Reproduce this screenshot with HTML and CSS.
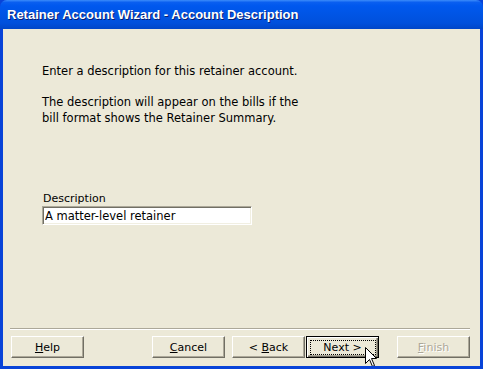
FILE: index.html
```html
<!DOCTYPE html>
<html lang="en">
<head>
    <meta charset="UTF-8">
    <title>Retainer Account Wizard - Account Description</title>
    <link rel="stylesheet" href="styles.css">
</head>
<body>
    <div class="window">
        <div class="title-bar">
            <span class="title-text">Retainer Account Wizard - Account Description</span>
        </div>
        <div class="frame">
            <div class="content">
                <p class="intro">Enter a description for this retainer account.</p>
                <p class="note">The description will appear on the bills if the<br>bill format shows the Retainer Summary.</p>

                <div class="field">
                    <label for="description">Description</label>
                    <input type="text" id="description" class="edit" value="A matter-level retainer">
                </div>
            </div>

            <div class="separator"></div>

            <div class="actions">
                <button type="button" class="btn"><span><u>H</u>elp</span></button>
                <div class="actions-right">
                    <button type="button" class="btn"><span><u>C</u>ancel</span></button>
                    <button type="button" class="btn btn-back"><span>&lt; <u>B</u>ack</span></button>
                    <button type="button" class="btn btn-default"><span class="focus">Next &gt;</span></button>
                    <button type="button" class="btn btn-finish" disabled><span><u>F</u>inish</span></button>
                </div>
            </div>

            <!-- mouse pointer over the Next button -->
            <svg class="cursor" width="12" height="20" viewBox="0 0 12 20">
                <path d="M0.5 0.5 L0.5 16.5 L4.5 12.5 L7.5 19.5 L9.5 18.5 L6.5 11.5 L11.5 11.5 Z" fill="#fff" stroke="#000" stroke-width="1"/>
            </svg>
        </div>
    </div>
</body>
</html>
```

FILE: styles.css
```css
* {
    margin: 0;
    padding: 0;
    box-sizing: border-box;
}

body {
    background-color: #ece9d8;
    font-family: Tahoma, 'DejaVu Sans', 'Liberation Sans', sans-serif;
    font-size: 11px;
    color: #000;
}

.window {
    width: 483px;
    height: 369px;
    display: flex;
    flex-direction: column;
    background-color: #0843d8;
}

.title-bar {
    height: 29px;
    flex: none;
    display: flex;
    align-items: center;
    padding-left: 7px;
    border-radius: 7px 7px 0 0;
    background: linear-gradient(to bottom, #3c8cfa 0%, #0a5ff0 8%, #0058ee 20%, #0054e3 55%, #0050dc 80%, #0046c8 100%);
}

.title-text {
    font-family: 'Liberation Sans', Arial, sans-serif;
    font-weight: bold;
    font-size: 13px;
    color: #fff;
    text-shadow: 1px 1px 0 #0a1e6e;
}

.frame {
    position: relative;
    flex: 1;
    margin: 0 3px 3px 3px;
    background-color: #ece9d8;
    display: flex;
    flex-direction: column;
    overflow: hidden;
}

.content {
    flex: 1;
    padding: 35px 0 0 39px;
}

.intro,
.note {
    font-size: 11.5px;
}

.intro {
    line-height: 14px;
}

.note {
    margin-top: 16px;
    line-height: 16px;
}

.field {
    margin-top: 66px;
    display: flex;
    flex-direction: column;
}

.field label {
    line-height: 13px;
    padding-left: 1px;
}

.edit {
    margin-top: 1px;
    width: 210px;
    height: 19px;
    font-family: inherit;
    font-size: 11.5px;
    padding: 0 2px;
    background-color: #fff;
    border: 1px solid;
    border-color: #aca899 #fff #fff #aca899;
    box-shadow: inset 1px 1px 0 #716f64, inset -1px -1px 0 #f1efe2;
    outline: none;
}

.separator {
    margin: 0 10px 0 7px;
    height: 2px;
    border-top: 1px solid #aca899;
    border-bottom: 1px solid #fff;
}

.actions {
    display: flex;
    justify-content: space-between;
    padding: 6px 10px 8px 8px;
}

.actions-right {
    display: flex;
}

.btn {
    width: 73px;
    height: 22px;
    font-family: inherit;
    font-size: 11px;
    color: #000;
    background-color: #ece9d8;
    border: 1px solid;
    border-color: #fff #716f64 #716f64 #fff;
    box-shadow: inset -1px -1px 0 #aca899;
    display: flex;
    align-items: center;
    justify-content: center;
}

.btn-back {
    margin-left: 7px;
}

.btn.btn-default {
    margin-left: 1px;
    border: 1px solid #000;
    box-shadow: inset 1px 1px 0 #fff, inset -1px -1px 0 #716f64, inset -2px -2px 0 #aca899;
}

.focus {
    width: 66px;
    height: 15px;
    display: flex;
    align-items: center;
    justify-content: center;
    border: 1px dotted #000;
}

.btn.btn-finish {
    margin-left: 18px;
    color: #aca899;
    text-shadow: 1px 1px 0 #fff;
}

.cursor {
    position: absolute;
    left: 362px;
    top: 318px;
}
```
